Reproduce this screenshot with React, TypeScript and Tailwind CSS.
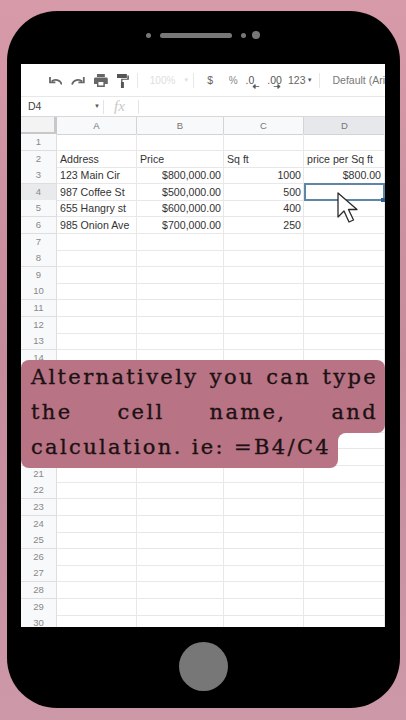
import React from 'react';

const sans = "font-['Liberation_Sans',Arial,sans-serif]";

type Row = { a?: string; b?: string; c?: string; d?: string };

const data: Record<number, Row> = {
  2: { a: 'Address', b: 'Price', c: 'Sq ft', d: 'price per Sq ft' },
  3: { a: '123 Main Cir', b: '$800,000.00', c: '1000', d: '$800.00' },
  4: { a: '987 Coffee St', b: '$500,000.00', c: '500' },
  5: { a: '655 Hangry st', b: '$600,000.00', c: '400' },
  6: { a: '985 Onion Ave', b: '$700,000.00', c: '250' },
};

const rows = Array.from({ length: 30 }, (_, i) => i + 1);
const gridCols = 'grid grid-cols-[36px_80px_87px_80px_81px]';

const Cell = ({ text, right, last }: { text?: string; right?: boolean; last?: boolean }) => (
  <div
    className={`border-r border-b border-[#e8e8e8] text-[10.6px] leading-[16px] text-[#333] whitespace-nowrap overflow-hidden ${
      right ? (last ? 'text-right pr-[3px]' : 'text-right pr-[2px]') : 'pl-[3px]'
    }`}
  >
    {text}
  </div>
);

const Toolbar = () => (
  <div className={`flex h-[33px] items-center bg-white border-b border-[#e8e8e8] pt-[1px] ${sans}`}>
    <div className="w-[28px]" />
    <svg width="14" height="9" viewBox="0 0 14 9" className="mr-[9px]">
      <path d="M13 8.5C11.5 4 6 2.5 2.8 5.2M1 1v5.5h5.5" fill="none" stroke="#666" strokeWidth="1.8" />
    </svg>
    <svg width="14" height="9" viewBox="0 0 14 9" className="mr-[9px]">
      <path d="M1 8.5C2.5 4 8 2.5 11.2 5.2M13 1v5.5H7.5" fill="none" stroke="#666" strokeWidth="1.8" />
    </svg>
    <svg width="14" height="13" viewBox="0 0 14 13" className="mr-[9px]">
      <path d="M3 0h8v3H3zM1.5 3.5h11A1.5 1.5 0 0 1 14 5v5h-3v3H3v-3H0V5a1.5 1.5 0 0 1 1.5-1.5z" fill="#666" />
      <path d="M4.5 8h5v3.5h-5z" fill="#fff" />
    </svg>
    <svg width="12" height="14" viewBox="0 0 12 14" className="mr-[8px]">
      <path d="M0 0h10v4H0zM10.5 1.5H12v4.2H5.5V8H7v6H4V8h.2V4.6h6.3z" fill="#555" />
    </svg>
    <div className="h-[15px] w-px bg-[#e8e8e8] mr-[12px]" />
    <span className="text-[10px] text-[#dedede] w-[34px]">100%</span>
    <span className="text-[6px] text-[#dedede] w-[10px]">▼</span>
    <div className="h-[15px] w-px bg-[#e8e8e8] mr-[12px]" />
    <span className="text-[10.5px] text-[#666] w-[23px] pl-[1px]">$</span>
    <span className="text-[10px] text-[#888] w-[17px]">%</span>
    <span className="relative text-[10.5px] text-[#555] w-[22px]">
      .0
      <svg width="8" height="5" viewBox="0 0 10 5" className="absolute left-[6px] top-[11px]">
        <path d="M9 2.5H3M4 0 1 2.5 4 5z" stroke="#555" fill="#555" strokeWidth="1" />
      </svg>
    </span>
    <span className="relative text-[10.5px] text-[#555] w-[21px]">
      .00
      <svg width="8" height="5" viewBox="0 0 10 5" className="absolute left-[6px] top-[11px]">
        <path d="M1 2.5h6M6 0l3 2.5L6 5z" stroke="#555" fill="#555" strokeWidth="1" />
      </svg>
    </span>
    <span className="text-[10.5px] text-[#666] w-[19px]">123</span>
    <span className="text-[6px] text-[#555] w-[12px]">▼</span>
    <div className="h-[15px] w-px bg-[#e8e8e8] mr-[13px]" />
    <span className="text-[10.5px] text-[#777] whitespace-nowrap">Default (Ari</span>
  </div>
);

const FormulaBar = () => (
  <div className={`flex h-[19px] items-center bg-white ${sans}`}>
    <span className="w-[73px] pl-[7px] text-[10.5px] text-[#444]">D4</span>
    <span className="w-[9px] text-[6px] text-[#555]">▼</span>
    <div className="h-[14px] w-px bg-[#e4e4e4] mr-[10px]" />
    <span className="w-[24px] font-['Liberation_Serif',serif] italic text-[15px] text-[#c8c8c8]">fx</span>
    <div className="h-[14px] w-px bg-[#e4e4e4]" />
  </div>
);

const Sheet = () => (
  <div className={sans}>
    <div className={`${gridCols} h-[18px] border-t border-[#d8d8d8] bg-[#f8f9fa] text-[9.5px] leading-[17px] text-center text-[#777]`}>
      <div className="border-r-[3px] border-b-[3px] border-[#c8c8c8] bg-[#f3f3f3]" />
      {['A', 'B', 'C'].map((col) => (
        <div key={col} className="border-r border-b border-[#d4d4d4]">
          {col}
        </div>
      ))}
      <div className="border-b border-[#d4d4d4] bg-[#e6e8eb]">D</div>
    </div>
    {rows.map((n) => {
      const row = data[n] ?? {};
      // rows 15 to 20 sit behind the caption
      const hidden = n >= 15 && n <= 20;
      return (
        <div key={n} className={`${gridCols} h-[16.6px] bg-white`}>
          <div
            className={`border-r border-b border-[#dedede] text-center text-[9.5px] leading-[16px] text-[#888] ${
              n === 4 ? 'bg-[#e8eaec]' : 'bg-[#f8f9fa]'
            }`}
          >
            {hidden ? '' : n}
          </div>
          <Cell text={row.a} />
          <Cell text={row.b} right={n > 2} />
          <Cell text={row.c} right={n > 2} />
          {n === 4 ? (
            <div className="relative z-10 border-2 border-[#5f86a6] -mt-px">
              <div className="absolute -right-[2px] -bottom-[3px] h-[4px] w-[4px] bg-[#2f6092]" />
            </div>
          ) : (
            <Cell text={row.d} right={n > 2} last />
          )}
        </div>
      );
    })}
  </div>
);

const Caption = () => (
  <div className="absolute left-0 top-[296px] w-full font-['DejaVu_Serif','Liberation_Serif',serif] text-[21px] tracking-[2.35px] leading-[35px] text-[#1d1114] [-webkit-text-stroke:0.35px_#1d1114]">
    <div className="rounded-t-[8px] rounded-br-[8px] bg-[#b87484] pl-[10px] pr-[7px] pb-[3px] text-justify whitespace-nowrap [text-align-last:justify]">
      <div>Alternatively you can type</div>
      <div>the cell name, and</div>
    </div>
    <div className="relative w-[317px] rounded-b-[8px] bg-[#b87484] pl-[10px] pb-[7px] leading-[28px] whitespace-nowrap">
      calculation. ie: =B4/C4
      <div className="absolute -right-[8px] top-0 h-[8px] w-[8px] bg-[#b87484]">
        <div className="h-full w-full rounded-tl-[8px] bg-white" />
      </div>
    </div>
  </div>
);

const Pointer = () => (
  <svg width="22" height="32" viewBox="0 0 22 32" className="absolute left-[316px] top-[128px] z-20">
    <path d="M1 1v24l6-6 5 11 4.5-2-5-10.5H20z" fill="#fff" stroke="#2a2a2a" strokeWidth="1.3" strokeLinejoin="round" />
  </svg>
);

export default function App() {
  return (
    <div className="flex h-[720px] w-[406px] items-center justify-center overflow-hidden bg-gradient-to-b from-[#d79aa8] via-[#c48b9b] to-[#cd98a8]">
      <div className="flex h-[697px] w-[393px] -mt-[1px] flex-col items-center rounded-[50px] bg-black">
        <div className="flex h-[53px] w-full items-center justify-center pb-[5px]">
          <div className="h-[5px] w-[5px] rounded-full bg-[#777]" />
          <div className="ml-[9px] h-[5px] w-[72px] rounded-full bg-[#777]" />
          <div className="ml-[9px] h-[5px] w-[5px] rounded-full bg-[#777]" />
          <div className="ml-[6px] h-[8px] w-[8px] rounded-full bg-[#777]" />
        </div>
        <div className="relative h-[563px] w-[364px] overflow-hidden bg-white">
          <Toolbar />
          <FormulaBar />
          <Sheet />
          <Pointer />
          <Caption />
        </div>
        <div className="flex flex-1 items-center justify-center pb-[2px]">
          <div className="h-[49px] w-[49px] rounded-full bg-[#777]" />
        </div>
      </div>
    </div>
  );
}
